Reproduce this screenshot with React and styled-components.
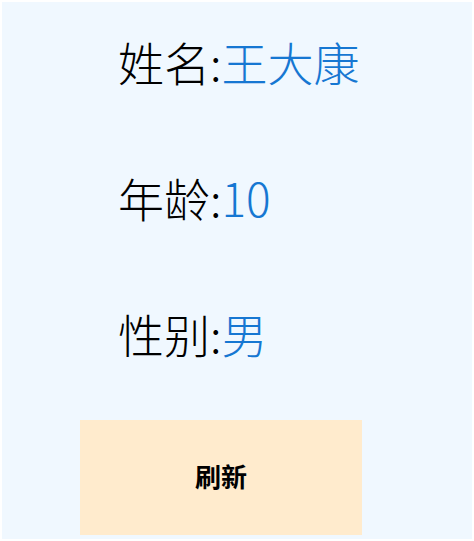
import React from 'react';
import styled, { createGlobalStyle } from 'styled-components';

const GlobalStyle = createGlobalStyle`
  html, body {
    margin: 0;
    padding: 0;
    background: #ffffff;
  }
  body {
    font-family: "Noto Sans CJK SC", "Noto Sans", sans-serif;
  }
`;

const Page = styled.div`
  margin: 2px;
  height: 537px;
  background: #f0f8ff;
  padding-top: 25px;
  box-sizing: border-box;
  display: flex;
  flex-direction: column;
`;

const Info = styled.div`
  display: flex;
  flex-direction: column;
  gap: 68px;
  padding-left: 116px;
`;

const Row = styled.div`
  font-size: 46px;
  font-weight: 300;
  line-height: 68px;
  color: #000000;
  white-space: nowrap;
`;

const Value = styled.span`
  color: #1677d2;
`;

const RefreshButton = styled.button`
  margin: 53px 0 0 78px;
  width: 282px;
  height: 115px;
  border: none;
  background: #ffebcd;
  font-family: "Noto Sans CJK SC", sans-serif;
  font-size: 26px;
  font-weight: 700;
  line-height: 1;
  color: #000000;
  cursor: pointer;
  padding: 0 0 4px;
`;

const person = [
  { label: '姓名', value: '王大康' },
  { label: '年龄', value: '10' },
  { label: '性别', value: '男' },
];

export default function App() {
  return (
    <>
      <GlobalStyle />
      <Page>
        <Info>
          {person.map((p) => (
            <Row key={p.label}>
              {p.label}:<Value>{p.value}</Value>
            </Row>
          ))}
        </Info>
        <RefreshButton>刷新</RefreshButton>
      </Page>
    </>
  );
}
